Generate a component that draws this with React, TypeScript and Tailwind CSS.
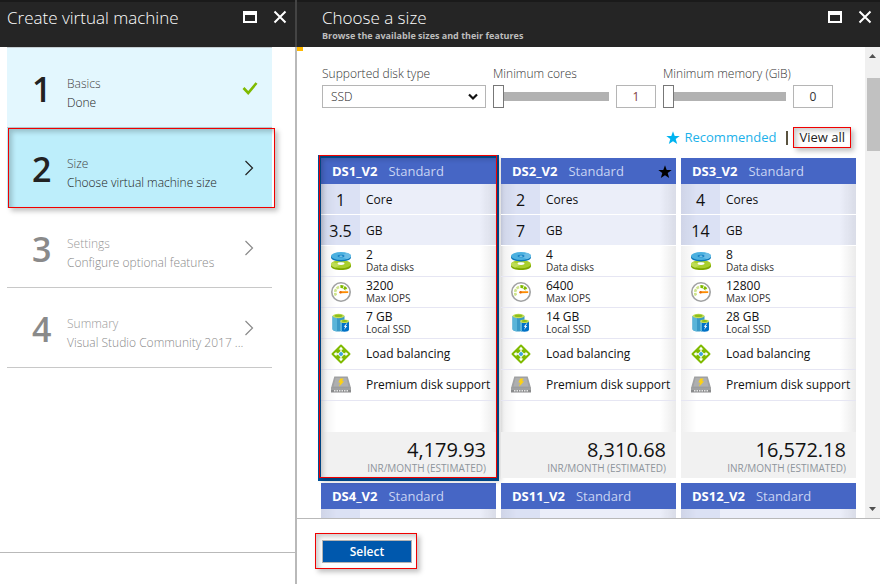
import { useState } from "react";
import clsx from "clsx";

const steps = [
  { title: "Basics", detail: "Done", state: "done" },
  { title: "Size", detail: "Choose virtual machine size", state: "active" },
  { title: "Settings", detail: "Configure optional features", state: "todo" },
  { title: "Summary", detail: "Visual Studio Community 2017 ...", state: "todo" },
];

const sizes = [
  { name: "DS1_V2", cores: 1, ram: "3.5", disks: 2, iops: 3200, ssd: 7, price: "4,179.93" },
  { name: "DS2_V2", cores: 2, ram: "7", disks: 4, iops: 6400, ssd: 14, price: "8,310.68", starred: true },
  { name: "DS3_V2", cores: 4, ram: "14", disks: 8, iops: 12800, ssd: 28, price: "16,572.18" },
];

const moreSizes = ["DS4_V2", "DS11_V2", "DS12_V2"];

type Size = (typeof sizes)[number];

function Highlight({ className }: { className: string }) {
  return (
    <span
      className={clsx(
        "pointer-events-none absolute border border-[#f00000] shadow-[3px_3px_5px_rgba(0,0,0,0.25),inset_3px_3px_5px_rgba(0,0,0,0.2)]",
        className
      )}
    />
  );
}

function WindowButtons() {
  return (
    <div className="flex gap-[15px] pt-2">
      <button type="button" aria-label="Maximize" className="h-4 w-4">
        <svg width="16" height="16" viewBox="0 0 16 16">
          <path d="M1 1h14v12H1zM3 5v6h10V5z" fill="#fff" fillRule="evenodd" />
        </svg>
      </button>
      <button type="button" aria-label="Close" className="h-4 w-4">
        <svg width="16" height="16" viewBox="0 0 16 16">
          <path d="M1.500 1.500l11 11M12.500 1.500l-11 11" stroke="#fff" strokeWidth="2" />
        </svg>
      </button>
    </div>
  );
}

function Star({ size, color }: { size: number; color: string }) {
  return (
    <svg width={size} height={size} viewBox="0 0 14 14">
      <path d="M7 0.300l1.700 4.700h5L9.700 8.100l1.500 5L7 10.200l-4.200 2.900 1.500-5L.3 5h5z" fill={color} />
    </svg>
  );
}

function DisksIcon() {
  return (
    <svg width="20" height="20" viewBox="0 0 20 20">
      <path d="M0 13.200v2C0 17.500 4.500 19 10 19s10-1.500 10-3.800v-2z" fill="#7fa900" />
      <ellipse cx="10" cy="13.200" rx="10" ry="4" fill="#a9cf2c" />
      <path d="M10 13.500L2 11.200C.5 12 0 12.800 0 13.500c0 1.200 1.500 2.500 4 3.200z" fill="#bfdc55" />
      <ellipse cx="10" cy="12.600" rx="3.500" ry="1.300" fill="#fff" />
      <path d="M0 5v1.600c0 2.300 4.500 3.900 10 3.900s10-1.600 10-3.900V5z" fill="#0a76b8" />
      <ellipse cx="10" cy="5" rx="10" ry="4" fill="#4bb0df" />
      <path d="M10 5L16 1.800c3 .9 4 2.100 4 3.200 0 1.300-1.500 2.400-4 3.200z" fill="#6bbde6" />
      <ellipse cx="10" cy="5" rx="3.500" ry="1.300" fill="#1b84c4" />
      <ellipse cx="10" cy="5.200" rx="1.600" ry=".6" fill="#8fd0ee" />
    </svg>
  );
}

function GaugeIcon() {
  return (
    <svg width="20" height="20" viewBox="0 0 20 20">
      <circle cx="10" cy="10" r="9.200" fill="#fff" stroke="#a0a1a2" strokeWidth="1.600" />
      <path d="M5 13.500A5.900 5.900 0 0 1 9.500 4.600" fill="none" stroke="#cfe38a" strokeWidth="2.600" strokeDasharray="2.800 0.900" />
      <path d="M9.500 4.600A5.900 5.900 0 0 1 15.400 8" fill="none" stroke="#7fba00" strokeWidth="3" strokeDasharray="2.800 0.700" />
      <path d="M9 9.300l8.200-.1v1.900L9 11.300z" fill="#ff8c00" />
      <circle cx="9.500" cy="10.300" r="1.200" fill="#e36c0a" />
    </svg>
  );
}

function LocalSsdIcon() {
  return (
    <svg width="20" height="20" viewBox="0 0 20 20">
      <path d="M1.500 3v13c0 1.600 2.700 2.500 6 2.500s6-.9 6-2.500V3z" fill="#3999c6" />
      <path d="M1.500 3v13c0 1.300 2 2.200 4.500 2.400V3z" fill="#59b4d9" />
      <ellipse cx="7.500" cy="3" rx="6" ry="2.200" fill="#c5dc5a" />
      <ellipse cx="7.500" cy="2.800" rx="4" ry="1.300" fill="#8cbf1a" />
      <path d="M9 8.500v8.300c0 1.200 2 1.900 4.500 1.900s4.500-.7 4.500-1.900V8.500z" fill="#0072c6" />
      <path d="M9 8.500v8.300c0 .8.800 1.400 2 1.700V8.500z" fill="#59b4d9" />
      <ellipse cx="13.500" cy="8.200" rx="4.500" ry="1.800" fill="#c5dc5a" />
      <ellipse cx="13.500" cy="8" rx="2.700" ry=".9" fill="#8cbf1a" />
      <path d="M15.500 10.500l-2.800 3.200h1.600l-1.300 3.400 3.200-4h-1.600l1.600-2.600z" fill="#fff" />
    </svg>
  );
}

function BalancerIcon() {
  return (
    <svg width="20" height="20" viewBox="0 0 20 20">
      <rect x="3" y="3" width="14" height="14" rx="1" transform="rotate(45 10 10)" fill="#7fba00" />
      <path d="M10 5v10M5 10h10" stroke="#fff" strokeWidth="1.300" />
      <path d="M10 2.700l2.300 2.800H7.700zM10 17.300l-2.300-2.800h4.600zM2.700 10l2.800-2.300v4.600zM17.300 10l-2.800 2.300V7.700z" fill="#fff" />
      <circle cx="10" cy="10" r="2.600" fill="#fff" />
      <circle cx="10" cy="10" r="2" fill="#3da5d9" />
    </svg>
  );
}

function PremiumDiskIcon() {
  return (
    <svg width="20" height="20" viewBox="0 0 20 20">
      <path d="M3.300 1.500h13.400L20 13H0z" fill="#a0a1a2" />
      <path d="M4.500 3h11l2 8.500h-15z" fill="#aeafb0" />
      <path d="M0 12.800h20v4.700H0z" fill="#8a8b8c" />
      <path d="M0 12.800h20V15H0z" fill="#a0a1a2" />
      <path d="M3 15.800h14" stroke="#e6e6e6" strokeWidth="1.500" strokeDasharray="1.500 1" />
      <path d="M9.300 3.500h3.200l-1.300 2.800h2L8 11.800l1.200-4.200H7.400z" fill="#fcd116" />
    </svg>
  );
}

function Spec({ icon, title, unit }: { icon: React.ReactNode; title: string; unit?: string }) {
  return (
    <span className="flex h-[31px] items-center border-b border-[#e6e6f3] pl-[10px]">
      {icon}
      <span className="ml-[15px] flex flex-col whitespace-nowrap text-[12px] leading-[12px]">
        {title}
        {unit && <span className="text-[10px] leading-[12px] text-[#333]">{unit}</span>}
      </span>
    </span>
  );
}

function CardHeader({ name, starred }: { name: string; starred?: boolean }) {
  return (
    <span className="flex h-[26px] items-center bg-[#4666c5] pl-[11px] pr-1 pt-px text-[13px]">
      <span className="font-bold text-white">{name}</span>
      <span className="ml-[11px] flex-1 text-[#c9d4f3]">Standard</span>
      {starred && <Star size={14} color="#000" />}
    </span>
  );
}

function SizeCard({ size, selected, onSelect }: { size: Size; selected: boolean; onSelect: () => void }) {
  return (
    <button
      type="button"
      aria-pressed={selected}
      onClick={onSelect}
      className={clsx(
        "relative block text-left text-[#111]",
        selected && "outline-[3px] outline-solid outline-[#00529b]"
      )}
    >
      <CardHeader name={size.name} starred={size.starred} />
      <span className="block bg-[linear-gradient(90deg,rgba(0,0,0,0.06),transparent_16px,transparent_calc(100%-16px),rgba(0,0,0,0.08))]">
        {[
          [size.cores, size.cores === 1 ? "Core" : "Cores"],
          [size.ram, "GB"],
        ].map(([value, unit]) => (
          <span key={unit} className="flex h-[31px] border-b border-white bg-[#4666c51c] text-[12px] leading-[32px]">
            <span className="w-[39px] bg-[#4666c518] text-center text-[16px]">{value}</span>
            <span className="pl-[6px]">{unit}</span>
          </span>
        ))}
        <Spec icon={<DisksIcon />} title={String(size.disks)} unit="Data disks" />
        <Spec icon={<GaugeIcon />} title={String(size.iops)} unit="Max IOPS" />
        <Spec icon={<LocalSsdIcon />} title={`${size.ssd} GB`} unit="Local SSD" />
        <Spec icon={<BalancerIcon />} title="Load balancing" />
        <Spec icon={<PremiumDiskIcon />} title="Premium disk support" />
        <span className="block h-[31px]" />
      </span>
      <span className="flex h-[46px] flex-col items-end bg-[#f1f1f1] pr-[10px] pt-[6px]">
        <span className="text-[20px] leading-[24px]">{size.price}</span>
        <span className="text-[10px] leading-[12px] text-[#8e959c]">INR/MONTH (ESTIMATED)</span>
      </span>
      {selected && <Highlight className="-left-[2px] -right-px -top-[3px] bottom-0" />}
    </button>
  );
}

function RangeField({ label, id, max, initial }: { label: string; id: string; max: number; initial: number }) {
  const [value, setValue] = useState(initial);
  return (
    <div>
      <label htmlFor={id} className="block whitespace-nowrap leading-[16px]">
        {label}
      </label>
      <div className="mt-[3px] flex gap-[7px]">
        <input
          id={id}
          type="range"
          min={initial}
          max={max}
          value={value}
          onChange={(e) => setValue(Number(e.target.value))}
          className="h-[23px] min-w-0 flex-1 appearance-none bg-transparent [&::-webkit-slider-runnable-track]:h-[9px] [&::-webkit-slider-runnable-track]:bg-[#b2b2b2] [&::-webkit-slider-thumb]:-mt-[7px] [&::-webkit-slider-thumb]:h-[23px] [&::-webkit-slider-thumb]:w-[11px] [&::-webkit-slider-thumb]:appearance-none [&::-webkit-slider-thumb]:border [&::-webkit-slider-thumb]:border-[#777] [&::-webkit-slider-thumb]:bg-white"
        />
        <input
          type="text"
          aria-label={label}
          value={value}
          onChange={(e) => setValue(Number(e.target.value) || 0)}
          className={clsx(
            "h-[23px] w-10 border border-[#b5b5b5] text-center font-normal",
            initial === 1 ? "text-[#804040]" : "text-[#333]"
          )}
        />
      </div>
    </div>
  );
}

export default function App() {
  const [selected, setSelected] = useState("DS1_V2");

  return (
    <div className="flex h-screen overflow-hidden bg-white font-['Open_Sans','Noto_Sans',sans-serif] text-[12px] text-[#222]">
      <aside className="flex w-[34%] max-w-[295px] shrink-0 flex-col">
        <header className="flex h-[47px] shrink-0 justify-between border-t-2 border-[#1a1a1a] bg-[#252525] pl-[7px] pr-[6px] text-white">
          <h1 className="pt-1 text-[17px] font-[350] leading-[24px]">Create virtual machine</h1>
          <WindowButtons />
        </header>
        <ol className="ml-[7px] mr-[23px]">
          {steps.map((step, i) => (
            <li key={step.title} className={clsx("relative", i === 0 && "border-t border-[#c5cfd3]")}>
              <button
                type="button"
                className={clsx(
                  "flex h-20 w-full items-center border-b pl-[25px] pr-[14px] text-left",
                  step.state === "done" && "border-[#b8c8ce] bg-[#e3f7fe]",
                  step.state === "active" && "border-[#bdeefb] bg-[#bdeefb]",
                  step.state === "todo" && "border-[#c8c8c8] text-[#8a8a8a]"
                )}
              >
                <span className="w-[35px] shrink-0 pt-[3px] text-[34px] font-[550] leading-[40px]">{i + 1}</span>
                <span className="min-w-0 flex-1 whitespace-nowrap pt-[11px] font-[350] leading-[19px]">
                  <span className={clsx("block", step.state === "todo" ? "text-[#999]" : "text-[#444]")}>
                    {step.title}
                  </span>
                  <span className="block">{step.detail}</span>
                </span>
                {step.state === "done" ? (
                  <svg width="16" height="16" viewBox="0 0 16 16" className="shrink-0">
                    <path d="M1.500 8l4.700 5L14.500 3" fill="none" stroke="#7fba00" strokeWidth="2.600" />
                  </svg>
                ) : (
                  <svg width="14" height="16" viewBox="0 0 14 16" className="shrink-0">
                    <path d="M1.500 1l7 7-7 7" fill="none" stroke="currentColor" strokeWidth="1.200" />
                  </svg>
                )}
              </button>
              {step.state === "active" && <Highlight className="-right-[3px] bottom-0 left-px top-0" />}
            </li>
          ))}
        </ol>
        <footer className="mt-auto h-8 border-t border-[#b9b9b9]" />
      </aside>

      <div className="w-[2px] shrink-0 bg-[linear-gradient(#444_47px,#b9b9b9_47px)]" />

      <main className="flex min-w-0 flex-1 flex-col">
        <header className="flex h-[47px] shrink-0 justify-between border-t-2 border-[#1a1a1a] bg-[#252525] pl-[25px] pr-[6px] text-white">
          <div className="pt-1">
            <h2 className="text-[17px] font-[350] leading-[24px]">Choose a size</h2>
            <p className="text-[9px] font-bold leading-[12px] text-[#bdbdbd]">
              Browse the available sizes and their features
            </p>
          </div>
          <WindowButtons />
        </header>

        <div className="flex min-h-0 flex-1 border-b border-[#b9b9b9]">
          <div className="min-w-0 flex-1 overflow-hidden">
            <div className="h-1 w-[6px] bg-[#ffb900]" />
            <form className="grid grid-cols-[minmax(0,164fr)_minmax(0,163fr)_minmax(0,170fr)] gap-[7px] pl-[25px] pr-8 pt-[15px] font-[350] text-[#333]">
              <div>
                <label htmlFor="disk" className="block leading-[16px]">
                  Supported disk type
                </label>
                <div className="relative mt-[3px]">
                  <select
                    id="disk"
                    className="block h-[23px] w-full appearance-none border border-[#b5b5b5] bg-white pl-2 text-[#222]"
                  >
                    <option>SSD</option>
                    <option>HDD</option>
                  </select>
                  <svg width="10" height="8" viewBox="0 0 10 8" className="pointer-events-none absolute right-2 top-2">
                    <path d="M1 1.500l4 4 4-4" fill="none" stroke="#111" strokeWidth="2.200" />
                  </svg>
                </div>
              </div>
              <RangeField label="Minimum cores" id="cores" max={32} initial={1} />
              <RangeField label="Minimum memory (GiB)" id="memory" max={448} initial={0} />
            </form>

            <div className="flex items-center justify-end pr-[14px] pt-[19px] text-[13px] leading-[21px]">
              <Star size={14} color="#00b3f0" />
              <a href="#recommended" className="ml-[5px] text-[#1cb1ea]">
                Recommended
              </a>
              <span className="ml-[10px] mr-[5px] h-[14px] w-[2px] bg-[#5a5340]" />
              <a href="#all" className="relative px-[6px] text-[#222]">
                View all
                <Highlight className="inset-0" />
              </a>
            </div>

            <div className="grid grid-cols-3 gap-[5px] pl-6 pr-[9px] pt-[10px]">
              {sizes.map((size) => (
                <SizeCard
                  key={size.name}
                  size={size}
                  selected={size.name === selected}
                  onSelect={() => setSelected(size.name)}
                />
              ))}
              {moreSizes.map((name) => (
                <button key={name} type="button" className="block text-left">
                  <CardHeader name={name} />
                  <span className="block bg-[linear-gradient(90deg,rgba(0,0,0,0.06),transparent_16px,transparent_calc(100%-16px),rgba(0,0,0,0.08))]">
                    <span className="flex h-[9px] bg-[#4666c51c]">
                      <span className="w-[39px] bg-[#4666c518]" />
                    </span>
                  </span>
                </button>
              ))}
            </div>
          </div>

          {/* Scrollbar */}
          <div className="flex w-[15px] shrink-0 flex-col items-center justify-between bg-[#f0f0f0] pb-[7px] pt-[7px]">
            <svg width="7" height="4" viewBox="0 0 7 4">
              <path d="M0 4l3.500-4L7 4z" fill="#505050" />
            </svg>
            <span className="mb-auto ml-[2px] mt-5 h-[73px] w-[13px] bg-[#c1c1c1]" />
            <svg width="7" height="4" viewBox="0 0 7 4">
              <path d="M0 0l3.500 4L7 0z" fill="#505050" />
            </svg>
          </div>
        </div>

        <footer className="flex h-[65px] shrink-0 items-start pl-[18px] pt-[14px]">
          <div className="relative pb-[6px] pl-[7px] pr-[5px] pt-[7px]">
            <Highlight className="inset-0" />
            <button
              type="button"
              className="relative block h-[23px] w-[90px] border border-[#b3b3b3] bg-[#0058ad] text-[12px] font-semibold text-white"
            >
              Select
            </button>
          </div>
        </footer>
      </main>
    </div>
  );
}
